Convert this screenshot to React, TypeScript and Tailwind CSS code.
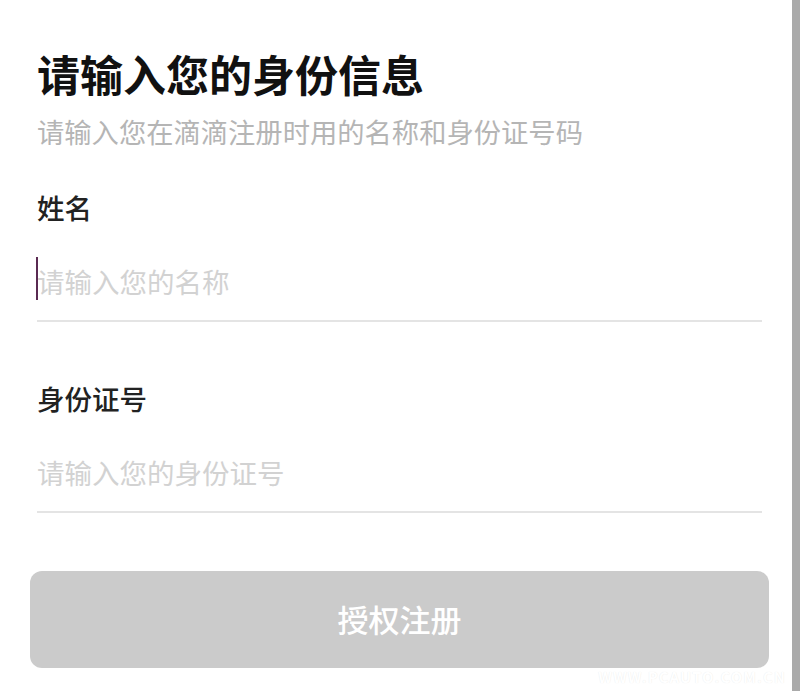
import React from "react";

const font = {
  fontFamily: '"Noto Sans CJK SC", "Noto Sans", sans-serif',
};

function Field({
  label,
  placeholder,
  focused,
}: {
  label: string;
  placeholder: string;
  focused?: boolean;
}) {
  return (
    <div>
      <div className="text-[27.5px] leading-[36px] font-medium text-[#222]">{label}</div>
      <div className="pt-[32px] pb-[15px] border-b-[2px] border-[#e4e4e4]">
        <div className="relative h-[48px]">
          {focused && (
            <span className="absolute left-[-1px] top-0 h-[43px] w-[2px] bg-[#5a2a52]" />
          )}
          <input
            className="w-full h-[48px] bg-transparent outline-none text-[27.5px] leading-[48px] text-[#222] placeholder:text-[#d2d2d2]"
            style={font}
            placeholder={placeholder}
          />
        </div>
      </div>
    </div>
  );
}

export default function App() {
  return (
    <div className="relative flex h-[691px] w-full bg-white overflow-hidden" style={font}>
      <div className="flex-1 min-w-0 pl-[37px] pr-[30px] pt-[49px]">
        <h1 className="text-[43px] leading-[48px] font-bold text-[#111]">请输入您的身份信息</h1>
        <p className="mt-[16px] text-[27.3px] leading-[36px] text-[#b5b5b5]">
          请输入您在滴滴注册时用的名称和身份证号码
        </p>

        <div className="mt-[40px]">
          <Field label="姓名" placeholder="请输入您的名称" focused />
        </div>
        <div className="mt-[58px]">
          <Field label="身份证号" placeholder="请输入您的身份证号" />
        </div>

        <button
          className="mt-[58px] -ml-[7px] w-[739px] h-[97px] rounded-[12px] bg-[#cbcbcb] text-white text-[31px] font-medium"
          style={font}
        >
          授权注册
        </button>
      </div>
      <div className="w-[8px] shrink-0 bg-[#aaaaaa]" />

      {/* watermark */}
      <div className="absolute right-[14px] bottom-[3px] text-[15px] font-bold tracking-[1px] text-white [text-shadow:0_0_1px_#e6e6e6]">
        WWW.PCAUTO.COM.CN
      </div>
    </div>
  );
}
